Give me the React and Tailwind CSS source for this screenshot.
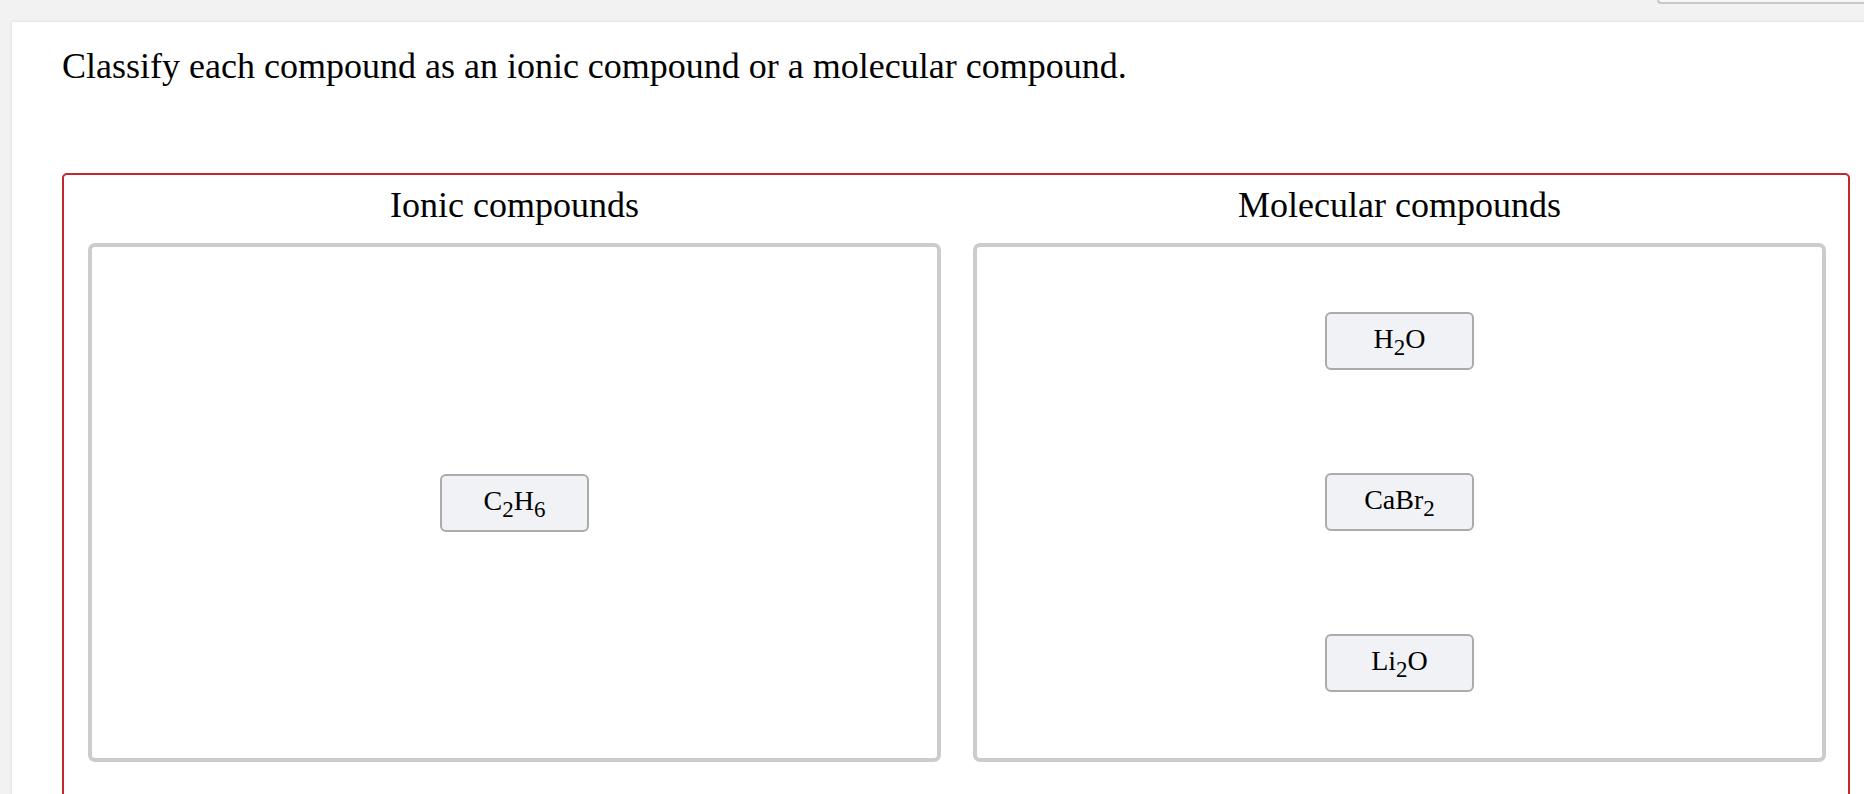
import React from "react";

const serif = { fontFamily: '"Liberation Serif", "Times New Roman", serif' };

function Chip({ children }) {
  return (
    <div className="w-[149px] h-[58px] rounded-[6px] border-2 border-[#ababab] bg-[#f1f2f6] flex items-center justify-center text-[28px] leading-none text-black pb-[4px]">
      <span>{children}</span>
    </div>
  );
}

function Sub({ children }) {
  return <sub className="text-[23px] bottom-[-0.32em]">{children}</sub>;
}

export default function App() {
  return (
    <div className="w-[1864px] h-[794px] bg-[#f2f2f2] overflow-hidden" style={serif}>
      <div className="h-[22px] flex justify-end items-start">
        <div className="w-[207px] h-[4px] border-b-2 border-l-2 border-[#c8c8c8] rounded-bl-[5px] bg-[#f6f6f6]" />
      </div>
      <div className="ml-[12px] bg-white h-[800px] pl-[50px] pr-[14px] pt-[24px] shadow-[0_0_3px_rgba(0,0,0,0.12)]">
        <h1 className="text-[36px] leading-[41px] text-black">
          Classify each compound as an ionic compound or a molecular compound.
        </h1>
        <div className="mt-[86px] border-2 border-[#c3272e] rounded-[5px] pt-[10px] pl-[24px] pr-[22px] pb-[40px]">
          <div className="grid grid-cols-2 gap-x-[32px]">
            <div className="flex flex-col">
              <div className="text-[36px] leading-[41px] text-center text-black">Ionic compounds</div>
              <div className="mt-[17px] h-[519px] border-4 border-[#cccccc] rounded-[7px] flex items-center justify-center">
                <Chip>
                  C<Sub>2</Sub>H<Sub>6</Sub>
                </Chip>
              </div>
            </div>
            <div className="flex flex-col">
              <div className="text-[36px] leading-[41px] text-center text-black">Molecular compounds</div>
              <div className="mt-[17px] h-[519px] border-4 border-[#cccccc] rounded-[7px] flex flex-col items-center justify-center gap-[103px] pb-[2px]">
                <Chip>
                  H<Sub>2</Sub>O
                </Chip>
                <Chip>
                  CaBr<Sub>2</Sub>
                </Chip>
                <Chip>
                  Li<Sub>2</Sub>O
                </Chip>
              </div>
            </div>
          </div>
        </div>
      </div>
    </div>
  );
}
